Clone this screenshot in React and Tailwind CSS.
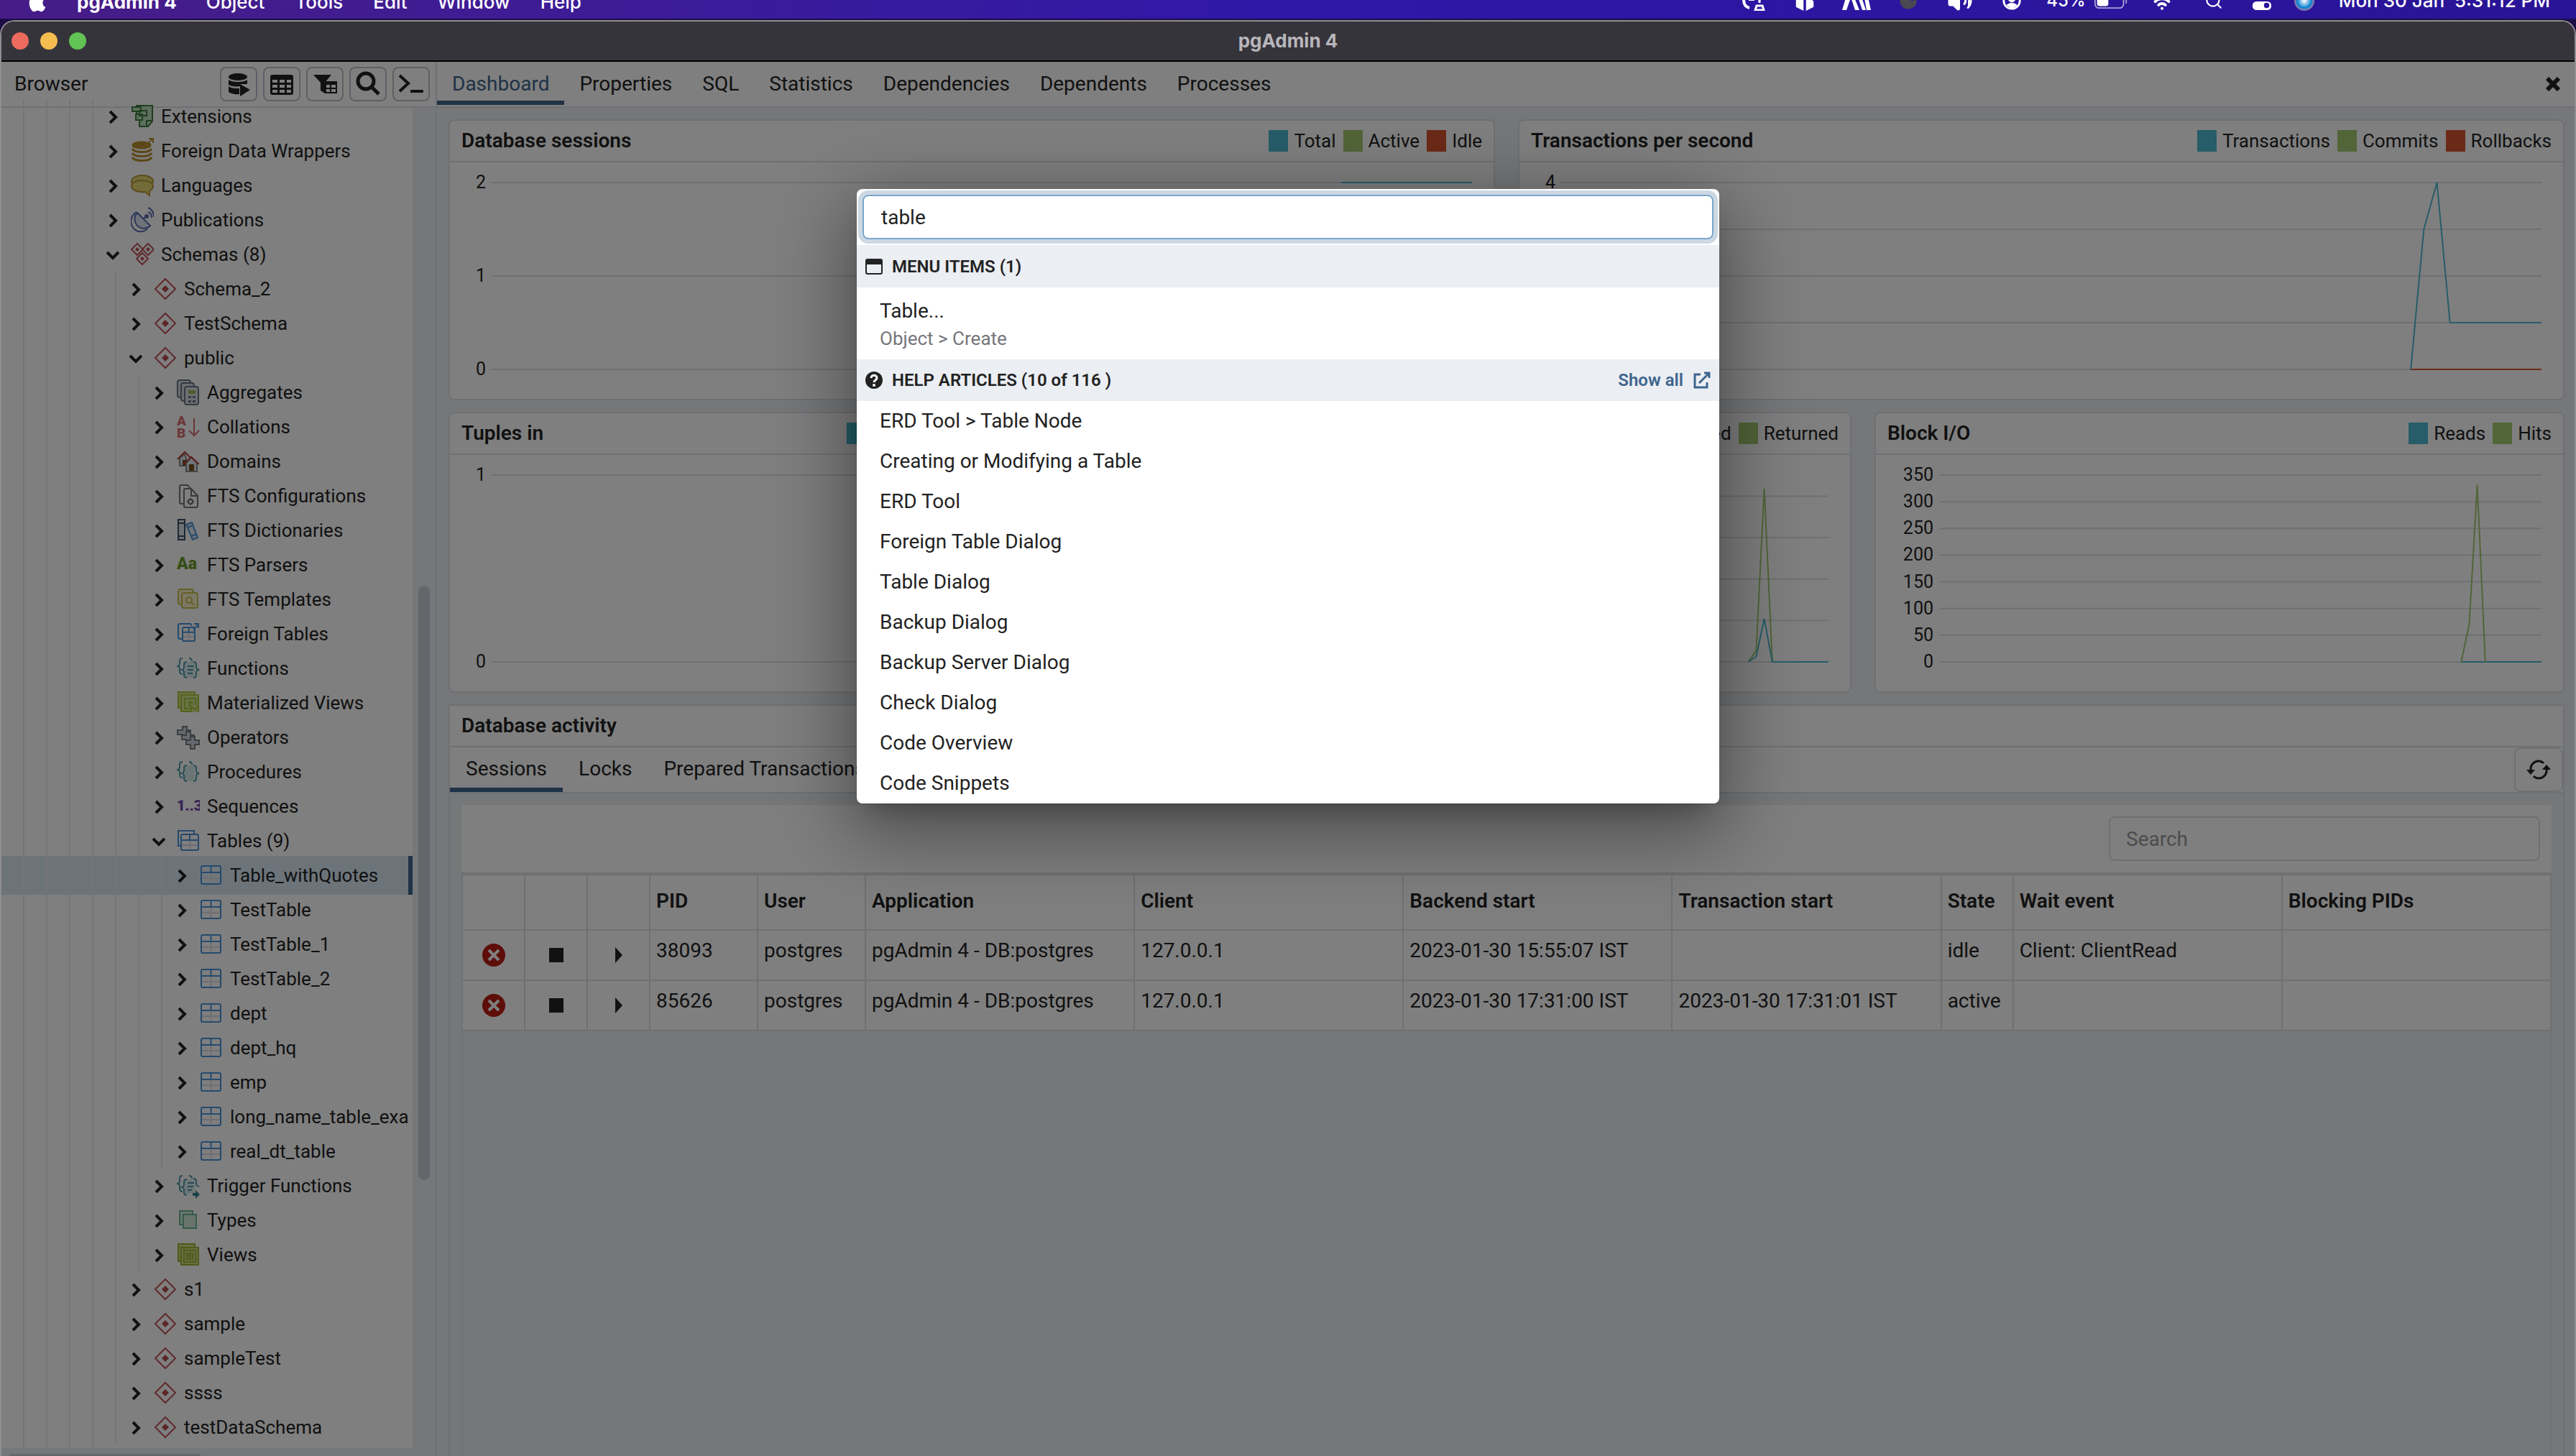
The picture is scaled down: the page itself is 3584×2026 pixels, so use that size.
import { Moon, Search, Volume2, Wifi } from 'lucide-react'

const TABLE_BLUE = '#4a95d8'

function TableGlyph({ x = 2, y = 5, w = 27, h = 25 }) {
  return (
    <g fill="none" strokeWidth="2">
      <path d={`M${x + 1} ${y + h * 0.68}h${w - 2}M${x + w / 2} ${y + h * 0.4}v${h * 0.55}`} stroke="#d2d2d6" />
      <rect x={x} y={y} width={w} height={h} rx="2" stroke={TABLE_BLUE} fill="#fff" fillOpacity="0.3" />
      <path d={`M${x} ${y + h * 0.36}h${w}M${x + w / 2} ${y}v${h * 0.36}`} stroke={TABLE_BLUE} />
    </g>
  )
}

function Diamond({ cx, cy, r, dot }) {
  return (
    <g>
      <path d={`M${cx} ${cy - r}L${cx + r} ${cy}L${cx} ${cy + r}L${cx - r} ${cy}Z`} fill="none" stroke="#c2555a" strokeWidth="2" />
      <path d={`M${cx} ${cy - dot}L${cx + dot} ${cy}L${cx} ${cy + dot}L${cx - dot} ${cy}Z`} fill="#b84a4c" />
    </g>
  )
}

const BRACES_BACK = 'M8 4c-4 0-4 2-4 6 0 3 0 4-3 5 3 1 3 2 3 5 0 4 0 6 4 6M17 4c3 0 4 1 4 4'
const BRACES_FRONT = 'M14 9c-4 0-4 2-4 6 0 3 0 4-3 5 3 1 3 2 3 5 0 4 0 6 4 6'
const BRACES_RIGHT = 'M23 9c4 0 4 2 4 6 0 3 0 4 4 5-4 1-4 2-4 5 0 4 0 6-4 6'

const GLYPHS = {
  extensions: (
    <g fill="#b9dcb9" stroke="#3f7f3f" strokeWidth="2">
      <path d="M8 3h22v22l-6 7h-12V20H8z" />
      <path d="M2 5h12v6H2zM12 10h10v7H12zM7 15h9v8H7z" />
      <path d="M22 32v-8h8" fill="none" />
    </g>
  ),
  wrappers: (
    <g fill="none" stroke="#b8912f" strokeWidth="3">
      <ellipse cx="15" cy="10" rx="12" ry="4" fill="#b8912f" />
      <path d="M2 15c3 6 24 6 27 0M2 21c3 6 24 6 27 0M2 27c3 6 24 6 27 0" />
      <path d="M24 7l6-5M25 1h6v6" strokeWidth="2" />
    </g>
  ),
  languages: (
    <g fill="#e4d873" stroke="#b8963a" strokeWidth="2">
      <ellipse cx="16" cy="12" rx="15" ry="8" />
      <path d="M16 11c9 0 15 4 15 8 0 3-2 5-5 7v6l-6-5c-11 1-19-3-19-8s6-8 15-8z" />
    </g>
  ),
  publications: (
    <g fill="none" stroke="#5a6bb0" strokeWidth="2">
      <path d="M8 7C-1 12-2 24 5 31c6 5 14 4 18-1" />
      <path d="M9 8c-7 8-3 20 8 22 5 0 8-2 10-4z" fill="#dfe4f4" />
      <path d="M17 17l5-5M24 7c3 1 5 4 5 8M24 1c5 2 8 7 8 13" />
      <circle cx="22" cy="13" r="2" fill="#5a6bb0" />
    </g>
  ),
  schemas: (
    <g>
      <Diamond cx={9} cy={11} r={8} dot={3} />
      <Diamond cx={24} cy={11} r={8} dot={3} />
      <Diamond cx={16} cy={24} r={8} dot={3} />
    </g>
  ),
  schema: <Diamond cx={16} cy={18} r={14} dot={5} />,
  aggregates: (
    <g fill="#d5dfe8" stroke="#70757a" strokeWidth="2">
      <rect x="1" y="1" width="18" height="24" rx="3" />
      <rect x="6" y="5" width="18" height="25" rx="3" />
      <rect x="11" y="10" width="19" height="25" rx="3" />
      <path d="M16 15h10v5H16z" fill="#9fb84e" stroke="none" />
      <path d="M16 23h4v3h-4zM22 23h4v3h-4zM16 29h4v3h-4zM22 29h4v3h-4z" fill="#70757a" stroke="none" />
    </g>
  ),
  collations: (
    <g>
      <text x="0" y="16" fontSize="19" fontWeight="900" fill="#d56f6f">A</text>
      <text x="0" y="33" fontSize="19" fontWeight="900" fill="#d56f6f">B</text>
      <path d="M24 6v23M17 23l7 7 7-7" fill="none" stroke="#d56f6f" strokeWidth="2" />
    </g>
  ),
  domains: (
    <g strokeWidth="2">
      <path d="M4 13v11h9V14l-2-6z" fill="#dce6ee" stroke="#888" />
      <path d="M8 16h6v8H8z" fill="#7a4d1c" stroke="none" />
      <path d="M1 15L11 5l9 9" fill="none" stroke="#b9403c" />
      <path d="M13 20v12h15V20l-8-8z" fill="#dce6ee" stroke="#888" />
      <path d="M17 22h7v9h-7z" fill="#7a4d1c" stroke="none" />
      <path d="M10 22l10-10 11 10" fill="none" stroke="#b9403c" />
    </g>
  ),
  ftsConfig: (
    <g fill="none" stroke="#757575" strokeWidth="2">
      <path d="M9 29H6c-1 0-2-1-2-2V5c0-1 1-2 2-2h9l4 5" />
      <path d="M11 8h9l9 10v14c0 1-1 2-2 2H12c-1 0-2-1-2-2V9z" />
      <path d="M20 8v10h9" />
      <circle cx="19" cy="26" r="3" />
      <path d="M19 21v2M19 29v2M14 26h2M22 26h2M16 23l1 1M21 28l1 1M22 23l-1 1M16 29l1-1" />
    </g>
  ),
  ftsDict: (
    <g fill="none" strokeWidth="2">
      <path d="M2 3h9v28H2zM2 8h9M2 26h9" stroke="#3c5368" fill="#dce6ee" />
      <path d="M13 10l8-3 8 21-7 3zM15 14l8-3M20 26l8-3" stroke={TABLE_BLUE} fill="#dce9f4" />
    </g>
  ),
  ftsParser: <text x="0" y="24" fontSize="23" fontWeight="900" fill="#6c9c2c">Aa</text>,
  ftsTemplate: (
    <g fill="#f7f1c8" stroke="#cdbd4e" strokeWidth="2">
      <rect x="2" y="4" width="21" height="21" rx="3" />
      <rect x="7" y="9" width="22" height="21" rx="3" />
      <circle cx="17" cy="19" r="4" fill="none" />
      <path d="M20 22l4 4" />
    </g>
  ),
  foreignTables: (
    <g>
      <path d="M7 25H4c-1 0-2-1-2-2V6c0-1 1-2 2-2h15l2 3" fill="none" stroke={TABLE_BLUE} strokeWidth="2" />
      <TableGlyph x={8} y={9} w={17} h={19} />
      <path d="M23 12l7-7M24 4h6v6" fill="none" stroke={TABLE_BLUE} strokeWidth="2" />
    </g>
  ),
  functions: (
    <g fill="none" stroke="#4b99a8" strokeWidth="2">
      <path d="M11 9h14v22H11z" fill="#dbecee" stroke="none" />
      <path d={BRACES_BACK} />
      <path d={BRACES_FRONT} />
      <path d={BRACES_RIGHT} />
      <path d="M15 15h9M15 20h8M15 25h7" />
    </g>
  ),
  procedures: (
    <g fill="none" stroke="#4b99a8" strokeWidth="2">
      <path d="M11 9h14v22H11z" fill="#dbecee" stroke="none" />
      <path d={BRACES_BACK} />
      <path d={BRACES_FRONT} />
      <path d={BRACES_RIGHT} />
    </g>
  ),
  matViews: (
    <g fill="#d5e58c" stroke="#a9c43c" strokeWidth="2">
      <path d="M2 3h23v22H2z" />
      <path d="M6 7h24v23H6z" />
      <path d="M19 26h-8V12h15v9M20 22h-3v-5h4v4" fill="none" />
      <path d="M20 31v-8l5 4 5-4v8" fill="#d5e58c" />
    </g>
  ),
  operators: (
    <g fill="#c9d4e0" stroke="#7a7c80" strokeWidth="2">
      <path d="M8 3h6v5h5v6h-5v4H8v-4H1V8h7z" />
      <path d="M13 10h6v5h5v6h-5v5h-6v-5H7v-6h6z" />
      <path d="M19 17h6v5h6v6h-6v6h-6v-6h-6v-6h6z" />
    </g>
  ),
  sequences: <text x="0" y="24" fontSize="20" fontWeight="900" fill="#7146b0">1..3</text>,
  tables: (
    <g>
      <path d="M6 25H2V4h22v5" fill="none" stroke={TABLE_BLUE} strokeWidth="2" />
      <TableGlyph x={6} y={9} w={24} h={22} />
    </g>
  ),
  table: <TableGlyph />,
  triggerFunctions: (
    <g fill="none" stroke="#4b99a8" strokeWidth="2">
      <path d="M11 9h14v20H11z" fill="#dbecee" stroke="none" />
      <path d={BRACES_BACK} />
      <path d={BRACES_FRONT} />
      <path d="M23 8c4 0 4 2 4 6 0 3 0 4 4 5M15 14h9M15 19h8M15 24h6" />
      <path d="M22 28h4v-4l6 6-6 6v-4h-4z" fill="#3b8592" stroke="none" />
    </g>
  ),
  types: (
    <g fill="#cfe8db" stroke="#6fb595" strokeWidth="2">
      <path d="M4 5h18v19H4z" />
      <path d="M9 10h18v19H9z" />
    </g>
  ),
  views: (
    <g fill="#cfdf80" stroke="#9db535" strokeWidth="2">
      <path d="M2 3h23v24H2z" />
      <path d="M6 8h24v24H6z" />
      <path d="M10 12h16v16H10zM14 16h8v8h-8zM17 19h2v2h-2z" fill="none" />
    </g>
  ),
}

const TREE = [
  { label: 'Extensions', icon: 'extensions', level: 4 },
  { label: 'Foreign Data Wrappers', icon: 'wrappers', level: 4 },
  { label: 'Languages', icon: 'languages', level: 4 },
  { label: 'Publications', icon: 'publications', level: 4 },
  { label: 'Schemas (8)', icon: 'schemas', level: 4, open: true },
  { label: 'Schema_2', icon: 'schema', level: 5 },
  { label: 'TestSchema', icon: 'schema', level: 5 },
  { label: 'public', icon: 'schema', level: 5, open: true },
  { label: 'Aggregates', icon: 'aggregates', level: 6 },
  { label: 'Collations', icon: 'collations', level: 6 },
  { label: 'Domains', icon: 'domains', level: 6 },
  { label: 'FTS Configurations', icon: 'ftsConfig', level: 6 },
  { label: 'FTS Dictionaries', icon: 'ftsDict', level: 6 },
  { label: 'FTS Parsers', icon: 'ftsParser', level: 6 },
  { label: 'FTS Templates', icon: 'ftsTemplate', level: 6 },
  { label: 'Foreign Tables', icon: 'foreignTables', level: 6 },
  { label: 'Functions', icon: 'functions', level: 6 },
  { label: 'Materialized Views', icon: 'matViews', level: 6 },
  { label: 'Operators', icon: 'operators', level: 6 },
  { label: 'Procedures', icon: 'procedures', level: 6 },
  { label: 'Sequences', icon: 'sequences', level: 6 },
  { label: 'Tables (9)', icon: 'tables', level: 6, open: true },
  { label: 'Table_withQuotes', icon: 'table', level: 7, selected: true },
  { label: 'TestTable', icon: 'table', level: 7 },
  { label: 'TestTable_1', icon: 'table', level: 7 },
  { label: 'TestTable_2', icon: 'table', level: 7 },
  { label: 'dept', icon: 'table', level: 7 },
  { label: 'dept_hq', icon: 'table', level: 7 },
  { label: 'emp', icon: 'table', level: 7 },
  { label: 'long_name_table_exa', icon: 'table', level: 7 },
  { label: 'real_dt_table', icon: 'table', level: 7 },
  { label: 'Trigger Functions', icon: 'triggerFunctions', level: 6 },
  { label: 'Types', icon: 'types', level: 6 },
  { label: 'Views', icon: 'views', level: 6 },
  { label: 's1', icon: 'schema', level: 5 },
  { label: 'sample', icon: 'schema', level: 5 },
  { label: 'sampleTest', icon: 'schema', level: 5 },
  { label: 'ssss', icon: 'schema', level: 5 },
  { label: 'testDataSchema', icon: 'schema', level: 5 },
]

const TEAL = '#4cbad1'
const GREEN = '#a4ca71'
const RED = '#d7552e'

// series points are [x, y] with x running over the 75 samples of the window
const CHARTS = {
  sessions: {
    title: 'Database sessions',
    ticks: [0, 1, 2],
    max: 2,
    legend: [['Total', TEAL], ['Active', GREEN], ['Idle', RED]],
    series: [
      { color: RED, points: [[65, 1], [75, 1]] },
      { color: GREEN, points: [[65, 1], [75, 1]] },
      { color: TEAL, points: [[65, 2], [75, 2]] },
    ],
  },
  transactions: {
    title: 'Transactions per second',
    ticks: [0, 1, 2, 3, 4],
    max: 4,
    legend: [['Transactions', TEAL], ['Commits', GREEN], ['Rollbacks', RED]],
    series: [
      { color: TEAL, points: [[65, 0], [66, 3], [67, 4], [68, 1], [75, 1]] },
      { color: RED, points: [[65, 0], [75, 0]] },
    ],
  },
  tuplesIn: {
    title: 'Tuples in',
    ticks: [0, 1],
    max: 1,
    legend: [['Inserts', TEAL], ['Updates', GREEN], ['Deletes', RED]],
    series: [],
  },
  tuplesOut: {
    title: 'Tuples out',
    ticks: [0, 500, 1000, 1500, 2000],
    max: 2255,
    wide: true,
    legend: [['Fetched', TEAL], ['Returned', GREEN]],
    series: [
      { color: GREEN, points: [[65, 0], [66, 135], [67, 2095], [68, 0], [75, 0]] },
      { color: TEAL, points: [[65, 0], [66, 65], [67, 520], [68, 0], [75, 0]] },
    ],
  },
  blockIo: {
    title: 'Block I/O',
    ticks: [0, 50, 100, 150, 200, 250, 300, 350],
    max: 350,
    wide: true,
    legend: [['Reads', TEAL], ['Hits', GREEN]],
    series: [
      { color: TEAL, points: [[65, 0], [75, 0]] },
      { color: GREEN, points: [[65, 0], [66, 70], [67, 332], [68, 0]] },
    ],
  },
}

const ACTIVITY = [
  ['38093', 'postgres', 'pgAdmin 4 - DB:postgres', '127.0.0.1', '2023-01-30 15:55:07 IST', '', 'idle', 'Client: ClientRead', ''],
  ['85626', 'postgres', 'pgAdmin 4 - DB:postgres', '127.0.0.1', '2023-01-30 17:31:00 IST', '2023-01-30 17:31:01 IST', 'active', '', ''],
]

const COLUMNS = ['PID', 'User', 'Application', 'Client', 'Backend start', 'Transaction start', 'State', 'Wait event', 'Blocking PIDs']

const ARTICLES = [
  'ERD Tool > Table Node',
  'Creating or Modifying a Table',
  'ERD Tool',
  'Foreign Table Dialog',
  'Table Dialog',
  'Backup Dialog',
  'Backup Server Dialog',
  'Check Dialog',
  'Code Overview',
  'Code Snippets',
]

function MenuSlot({ children }) {
  return <span className="flex w-[72px] items-center justify-center">{children}</span>
}

function MenuBar() {
  return (
    <div className="flex h-[26px] shrink-0 items-end justify-between overflow-hidden bg-linear-to-r from-[#471c87] via-[#2f17a8] to-[#291496] pr-[36px] pb-[7px] pl-[40px] font-['Inter',sans-serif] text-[26px] leading-8 font-medium text-white">
      <nav className="flex shrink-0 items-center">
        <svg className="mr-[42px]" width="25" height="28" viewBox="0 0 27 32" fill="currentColor">
          <path d="M13 8c3-2 9-2 12 2-5 4-5 11 1 14-2 5-5 8-8 7-3-2-6-2-9 0C4 32 0 24 0 17 0 9 7 5 13 8zM13 6c0-3 3-6 6-6 0 3-3 6-6 6z" />
        </svg>
        <a href="#app" className="mr-[41px] font-bold">pgAdmin 4</a>
        <a href="#object" className="mr-[42px]">Object</a>
        <a href="#tools" className="mr-[42px]">Tools</a>
        <a href="#edit" className="mr-[42px]">Edit</a>
        <a href="#window" className="mr-[42px]">Window</a>
        <a href="#help">Help</a>
      </nav>
      <div className="flex shrink-0 items-center whitespace-pre">
        <MenuSlot>
          <svg width="36" height="28" viewBox="0 0 36 28" fill="none" stroke="currentColor" strokeWidth="4">
            <path d="M18 4H5v8c0 7 3 11 8 12M12 12h8" />
            <path d="M21 27l2-6h8l2 6zM27 14v3" strokeWidth="3" />
            <circle cx="27" cy="11" r="3" fill="currentColor" stroke="none" />
          </svg>
        </MenuSlot>
        <MenuSlot>
          <svg width="28" height="28" viewBox="0 0 28 32" fill="currentColor">
            <path d="M0 0h12v32L0 26zM16 0h12v9l-4 4 4 4v9l-12 6z" />
          </svg>
        </MenuSlot>
        <MenuSlot>
          <svg width="40" height="28" viewBox="0 0 40 28" fill="currentColor">
            <path d="M8 0L0 27h6l6-17zM13 0H9l9 27h6zM24 0h-5l9 27h5zM34 0h-5l5 27h6z" />
          </svg>
        </MenuSlot>
        <MenuSlot>
          <Moon size={28} fill="#4a4850" stroke="#4a4850" />
        </MenuSlot>
        <MenuSlot>
          <Volume2 size={36} fill="currentColor" strokeWidth={2} />
        </MenuSlot>
        <MenuSlot>
          <svg width="28" height="28" viewBox="0 0 28 30" fill="none" stroke="currentColor" strokeWidth="3">
            <circle cx="14" cy="15" r="12" />
            <circle cx="14" cy="12" r="4" fill="currentColor" />
            <path d="M6 22c2-5 14-5 16 0l-8 5z" fill="currentColor" stroke="none" />
          </svg>
        </MenuSlot>
        <span className="ml-[12px] text-[24px]">45%</span>
        <svg className="mx-[10px]" width="50" height="24" viewBox="0 0 50 26" fill="none" stroke="currentColor" strokeWidth="2">
          <rect x="1" y="1" width="43" height="23" rx="6" opacity="0.6" />
          <rect x="4" y="4" width="17" height="17" rx="3" fill="currentColor" stroke="none" />
          <path d="M48 9v8" opacity="0.6" />
        </svg>
        <MenuSlot>
          <Wifi size={32} strokeWidth={3} />
        </MenuSlot>
        <MenuSlot>
          <Search size={26} strokeWidth={2} />
        </MenuSlot>
        <span className="flex w-[62px] items-center justify-center">
          <svg width="28" height="28" viewBox="0 0 28 30" fill="currentColor">
            <rect x="1" y="1" width="26" height="12" rx="6" opacity="0.7" />
            <rect y="16" width="28" height="13" rx="6" />
            <circle cx="21" cy="22" r="4" fill="#29149c" />
          </svg>
        </span>
        <span className="mr-[34px] ml-[14px] size-7 rounded-full bg-radial from-white via-sky-600 to-rose-500" />
        <span>Mon 30 Jan  5:31:12 PM</span>
      </div>
    </div>
  )
}

function TitleBar() {
  return (
    <div className="grid h-14 shrink-0 grid-cols-3 items-center border-b-2 border-black bg-[#36343b] px-[14px]">
      <div className="flex gap-4">
        <button type="button" aria-label="Close" className="size-6 rounded-full bg-[#ec6a5e]" />
        <button type="button" aria-label="Minimize" className="size-6 rounded-full bg-[#f4bd4f]" />
        <button type="button" aria-label="Zoom" className="size-6 rounded-full bg-[#61c454]" />
      </div>
      <h1 className="text-center font-['Inter',sans-serif] text-[26px] leading-8 font-bold text-[#b8b6bb]">pgAdmin 4</h1>
    </div>
  )
}

function ToolButton({ label, children }) {
  return (
    <button
      type="button"
      aria-label={label}
      className="flex h-12 w-13 items-center justify-center rounded-lg border-2 border-[#bac1cd] text-[#222]"
    >
      <svg width="36" height="36" viewBox="0 0 36 36" fill="currentColor">
        {children}
      </svg>
    </button>
  )
}

function BrowserHeader() {
  return (
    <div className="flex h-16 shrink-0 items-center justify-between border-b-2 border-[#dde0e6] pr-2 pl-[18px]">
      <h2 className="text-[28px] leading-8">Browser</h2>
      <div className="flex gap-2">
        <ToolButton label="Query tool">
          <ellipse cx="17" cy="8" rx="13" ry="5" />
          <path d="M4 12c4 4 22 4 26 0v6H20v3c-5 1-13 0-16-2zM4 21c3 3 10 3 15 3v8c-6 1-12-1-15-3z" />
          <path d="M20 18l14 8-14 9z" />
        </ToolButton>
        <ToolButton label="View data">
          <path fillRule="evenodd" d="M5 5h26a3 3 0 013 3v22a3 3 0 01-3 3H5a3 3 0 01-3-3V8a3 3 0 013-3zM5 12v4h7v-4zm10 0v4h7v-4zm10 0v4h6v-4zM5 19v4h7v-4zm10 0v4h7v-4zm10 0v4h6v-4zM5 26v4h7v-4zm10 0v4h7v-4zm10 0v4h6v-4z" />
        </ToolButton>
        <ToolButton label="Filtered rows">
          <path d="M2 5h25L18 16v15l-6-4V16z" />
          <path fillRule="evenodd" d="M18 14h17v17H18zM20 19v4h5v-4zm7 0v4h6v-4zM20 25v4h5v-4zm7 0v4h6v-4z" />
        </ToolButton>
        <ToolButton label="Search objects">
          <path d="M15 14m-11 0a11 11 0 1022 0a11 11 0 10-22 0M23 22l10 10" fill="none" stroke="currentColor" strokeWidth="5" />
        </ToolButton>
        <ToolButton label="PSQL tool">
          <path d="M2 6l12 11L2 28" fill="none" stroke="currentColor" strokeWidth="4" />
          <rect x="17" y="26" width="18" height="4" rx="1" />
        </ToolButton>
      </div>
    </div>
  )
}

function TreeRow({ item }) {
  const { label, icon, level, open, selected } = item
  return (
    <li
      role="treeitem"
      aria-expanded={!!open}
      aria-selected={!!selected}
      className={[
        'flex shrink-0 items-center whitespace-nowrap',
        selected ? 'relative -my-[3px] h-[54px] border-r-6 border-[#3e658d] bg-[#d8e8f5]' : 'h-12',
      ].join(' ')}
    >
      {Array.from({ length: level }, (_, i) => (
        <span key={i} className="w-8 shrink-0 self-stretch border-r-2 border-[#ebebed]" />
      ))}
      <button type="button" aria-label={open ? 'Collapse' : 'Expand'} className="flex w-[52px] shrink-0 justify-center">
        <svg width="20" height="20" viewBox="0 0 20 20" fill="none" stroke="#222" strokeWidth="4">
          {open ? <path d="M3 7l8 8 8-8" /> : <path d="M7 3l8 8-8 8" />}
        </svg>
      </button>
      <svg width="32" height="36" viewBox="0 0 32 36" className="shrink-0">
        {GLYPHS[icon]}
      </svg>
      <span className="ml-[10px]">{label}</span>
    </li>
  )
}

function Browser() {
  return (
    <aside className="flex w-[606px] shrink-0 flex-col border-r-2 border-[#dde0e6]">
      <BrowserHeader />
      <div className="flex min-h-0 flex-1">
        <div className="flex min-w-0 flex-1 flex-col">
          <ul role="tree" className="-mt-3 flex min-h-0 flex-1 flex-col overflow-hidden text-[26px] leading-8">
            {TREE.map((item) => (
              <TreeRow key={item.label} item={item} />
            ))}
            <li aria-hidden="true" className="flex h-12 shrink-0">
              {[0, 1, 2, 3].map((i) => (
                <span key={i} className="w-8 border-r-2 border-[#ebebed]" />
              ))}
            </li>
          </ul>
          <div className="h-[11px] shrink-0 overflow-hidden bg-[#ebeef3] pt-2 pl-2">
            <div className="h-4 w-[272px] rounded-full bg-[#cbccd6]" />
          </div>
        </div>
        <div className="flex w-8 flex-col items-center bg-[#ebeef3]">
          <div className="grow-[665]" />
          <div className="w-4 grow-[827] rounded-full bg-[#cbccd6]" />
          <div className="grow-[384]" />
        </div>
      </div>
    </aside>
  )
}

function MainTabs() {
  const tabs = ['Dashboard', 'Properties', 'SQL', 'Statistics', 'Dependencies', 'Dependents', 'Processes']
  return (
    <div className="flex h-16 shrink-0 items-stretch justify-between border-b-2 border-[#dde0e6] bg-white pr-5">
      <div role="tablist" className="flex">
        {tabs.map((tab, i) => (
          <button
            key={tab}
            type="button"
            role="tab"
            aria-selected={i === 0}
            className={[
              'mb-[2px] border-b-6 px-[21px] pt-2 text-[28px] leading-8',
              i === 0 ? 'border-[#3e658d] text-[#3e658d]' : 'border-transparent',
            ].join(' ')}
          >
            {tab}
          </button>
        ))}
      </div>
      <button type="button" aria-label="Close tab" className="self-center">
        <svg width="20" height="20" viewBox="0 0 20 20" fill="none" stroke="#222" strokeWidth="6">
          <path d="M2 2l16 16M18 2L2 18" />
        </svg>
      </button>
    </div>
  )
}

function Plot({ chart }) {
  const y = (v) => 260 - (v / chart.max) * 260
  return (
    <div className="flex gap-2 pt-7 pr-[30px] pb-[41px]">
      <div className={['relative h-[260px] text-right text-[25px] leading-8', chart.wide ? 'w-[80px]' : 'w-[50px]'].join(' ')}>
        {chart.ticks.map((t) => (
          <span key={t} className="absolute right-0 -mt-4" style={{ top: y(t) }}>
            {t}
          </span>
        ))}
      </div>
      <svg className="h-[260px] min-w-0 flex-1 overflow-visible" viewBox="0 0 75 260" preserveAspectRatio="none" fill="none">
        {chart.ticks.map((t) => (
          <path key={t} d={`M0 ${y(t)}H75`} stroke="#dde0e6" strokeWidth="2" vectorEffect="non-scaling-stroke" />
        ))}
        {chart.series.map((s, i) => (
          <polyline
            key={i}
            points={s.points.map(([px, py]) => `${px},${y(py)}`).join(' ')}
            stroke={s.color}
            strokeWidth="2"
            vectorEffect="non-scaling-stroke"
          />
        ))}
      </svg>
    </div>
  )
}

function ChartCard({ chart }) {
  return (
    <section className="min-w-0 flex-1 rounded-lg border-2 border-[#dde0e6] bg-white">
      <header className="flex h-[58px] items-center justify-between border-b-2 border-[#dde0e6] px-4">
        <h3 className="text-[28px] leading-8 font-semibold">{chart.title}</h3>
        <ul className="flex gap-[10px] text-[26px] leading-[30px]">
          {chart.legend.map(([name, color]) => (
            <li key={name} className="flex gap-2">
              <span className="w-[27px]" style={{ backgroundColor: color }} />
              {name}
            </li>
          ))}
        </ul>
      </header>
      <Plot chart={chart} />
    </section>
  )
}

function ActivityTable() {
  return (
    <table className="w-full table-fixed border-collapse border-x-2 border-t-4 border-[#dde0e6] bg-white text-left text-[28px]">
      <colgroup>
        <col className="w-[87px]" />
        <col className="w-[87px]" />
        <col className="w-[87px]" />
        <col className="w-[150px]" />
        <col className="w-[150px]" />
        <col />
        <col />
        <col />
        <col />
        <col className="w-[100px]" />
        <col />
        <col />
      </colgroup>
      <thead>
        <tr className="h-[78px] border-b-2 border-[#dde0e6]">
          {['Terminate', 'Cancel', 'Details'].map((name) => (
            <th key={name} aria-label={name} className="border-r-2 border-[#dde0e6]" />
          ))}
          {COLUMNS.map((name) => (
            <th key={name} className="border-r-2 border-[#dde0e6] px-2 pb-1 leading-8 font-semibold whitespace-nowrap">
              {name}
            </th>
          ))}
        </tr>
      </thead>
      <tbody>
        {ACTIVITY.map((row) => (
          <tr key={row[0]} className="h-[70px] border-b-2 border-[#dde0e6]">
            <td className="border-r-2 border-[#dde0e6]">
              <button type="button" aria-label="Terminate session" className="mx-auto block">
                <svg width="32" height="32" viewBox="0 0 32 32">
                  <circle cx="16" cy="16" r="16" fill="#bb1c12" />
                  <path d="M9 9l14 14M23 9L9 23" stroke="#fff" strokeWidth="4" />
                </svg>
              </button>
            </td>
            <td className="border-r-2 border-[#dde0e6]">
              <button type="button" aria-label="Cancel query" className="mx-auto block size-5 bg-[#222]" />
            </td>
            <td className="border-r-2 border-[#dde0e6]">
              <button type="button" aria-label="View details" className="mx-auto block">
                <svg width="12" height="22" viewBox="0 0 12 22" fill="#222">
                  <path d="M1 0l10 11L1 22z" />
                </svg>
              </button>
            </td>
            {row.map((cell, i) => (
              <td key={i} className="border-r-2 border-[#dde0e6] px-2 pb-3 leading-8 whitespace-nowrap">
                {cell}
              </td>
            ))}
          </tr>
        ))}
      </tbody>
    </table>
  )
}

function Activity() {
  return (
    <section className="flex flex-1 flex-col border-x-2 border-t-2 border-[#dde0e6]">
      <header className="flex h-[58px] items-center border-b-2 border-[#dde0e6] bg-white px-4">
        <h3 className="text-[28px] leading-8 font-semibold">Database activity</h3>
      </header>
      <div className="flex h-16 items-stretch justify-between border-b-2 border-[#dde0e6] bg-white">
        <div role="tablist" className="flex">
          {['Sessions', 'Locks', 'Prepared Transactions', 'Configuration'].map((tab, i) => (
            <button
              key={tab}
              type="button"
              role="tab"
              aria-selected={i === 0}
              className={['border-b-6 px-[22px] pt-1 text-[28px] leading-8', i === 0 ? 'border-[#3e658d]' : 'border-transparent'].join(' ')}
            >
              {tab}
            </button>
          ))}
        </div>
        <button type="button" aria-label="Refresh" className="flex w-[68px] items-center justify-center rounded-lg border-2 border-[#dde0e6]">
          <svg width="34" height="30" viewBox="0 0 34 30" fill="none" stroke="#222" strokeWidth="3">
            <path d="M6 16C5 8 11 3 17 3c3 0 5 1 7 3M28 14c1 8-5 13-11 13-3 0-5-1-7-3" />
            <path d="M0 15h12l-6 7zM22 15h12l-6-7z" fill="#222" stroke="none" />
          </svg>
        </button>
      </div>
      <div className="flex flex-1 flex-col px-4 pt-4">
        <div className="flex h-[94px] items-center justify-end bg-white pr-4">
          <input
            type="search"
            aria-label="Search sessions"
            placeholder="Search"
            className="h-[62px] w-[600px] rounded-lg border-2 border-[#dde0e6] px-[22px] text-[28px] placeholder:text-[#999]"
          />
        </div>
        <ActivityTable />
        <div className="flex-1 border-x-2 border-[#e4e7ed]" />
      </div>
    </section>
  )
}

function Dashboard() {
  return (
    <main className="flex min-w-0 flex-1 flex-col bg-[#ebeef3]">
      <MainTabs />
      <div className="flex flex-1 flex-col gap-4 pt-4 pr-[14px] pl-4">
        <div className="flex gap-8">
          <ChartCard chart={CHARTS.sessions} />
          <ChartCard chart={CHARTS.transactions} />
        </div>
        <div className="flex gap-8">
          <ChartCard chart={CHARTS.tuplesIn} />
          <ChartCard chart={CHARTS.tuplesOut} />
          <ChartCard chart={CHARTS.blockIo} />
        </div>
        <Activity />
      </div>
    </main>
  )
}

function QuickSearch() {
  return (
    <div
      role="dialog"
      aria-label="Quick search"
      className="w-[1200px] overflow-hidden rounded-lg bg-white shadow-[0_22px_30px_-14px_rgba(0,0,0,0.2),0_30px_110px_12px_rgba(0,0,0,0.4)]"
    >
      <div className="p-2">
        <input
          type="text"
          aria-label="Quick search"
          defaultValue="table"
          className="block h-[62px] w-full rounded-lg border-2 border-[#7aa5cf] px-6 text-[28px] ring-6 ring-[#cdd8e3] outline-none"
        />
      </div>
      <h4 className="flex h-[59px] items-center gap-[13px] bg-[#ebeef3] px-3 text-[24px] leading-8 font-semibold">
        <svg width="24" height="24" viewBox="0 0 24 24">
          <rect x="1" y="2" width="22" height="20" rx="2" fill="none" stroke="#222" strokeWidth="2" />
          <path d="M1 2h22v7H1z" fill="#222" />
        </svg>
        MENU ITEMS (1)
      </h4>
      <a href="#create-table" className="flex h-[100px] flex-col justify-center px-8 pt-1">
        <span className="text-[28px] leading-[38px]">Table...</span>
        <span className="text-[26px] leading-[38px] text-[#75767b]">Object &gt; Create</span>
      </a>
      <div className="flex h-[58px] items-center justify-between bg-[#ebeef3] px-3 text-[24px] leading-8 font-semibold">
        <h4 className="flex items-center gap-[13px]">
          <svg width="24" height="24" viewBox="0 0 24 24">
            <circle cx="12" cy="12" r="12" fill="#222" />
            <path d="M8 9c0-5 8-5 8 0 0 3-4 3-4 6" fill="none" stroke="#fff" strokeWidth="3" />
            <circle cx="12" cy="19" r="2" fill="#fff" />
          </svg>
          HELP ARTICLES (10 of 116 )
        </h4>
        <a href="#help-articles" className="flex items-center gap-[14px] text-[#3e658d]">
          Show all
          <svg width="24" height="24" viewBox="0 0 24 24" fill="none" stroke="currentColor" strokeWidth="3">
            <path d="M10 4H2v18h17v-7M8 16L21 3M15 2h7v7" />
          </svg>
        </a>
      </div>
      <ul>
        {ARTICLES.map((title) => (
          <li key={title}>
            <a href="#article" className="flex h-14 items-center px-8 text-[28px] leading-8">
              {title}
            </a>
          </li>
        ))}
      </ul>
    </div>
  )
}

export default function App() {
  return (
    <div className="flex h-screen flex-col overflow-hidden bg-[#1c0d45] font-['Roboto',sans-serif] text-[#222]">
      <MenuBar />
      <div className="mt-[2px] flex min-h-0 flex-1 flex-col overflow-hidden rounded-t-[20px] border-x-2 border-t-2 border-[#8e8e90]">
        <TitleBar />
        <div className="relative flex min-h-0 flex-1 bg-white">
          <Browser />
          <Dashboard />
          <div className="absolute inset-0 flex items-start justify-center bg-black/50 pt-[177px]">
            <QuickSearch />
          </div>
        </div>
      </div>
    </div>
  )
}
